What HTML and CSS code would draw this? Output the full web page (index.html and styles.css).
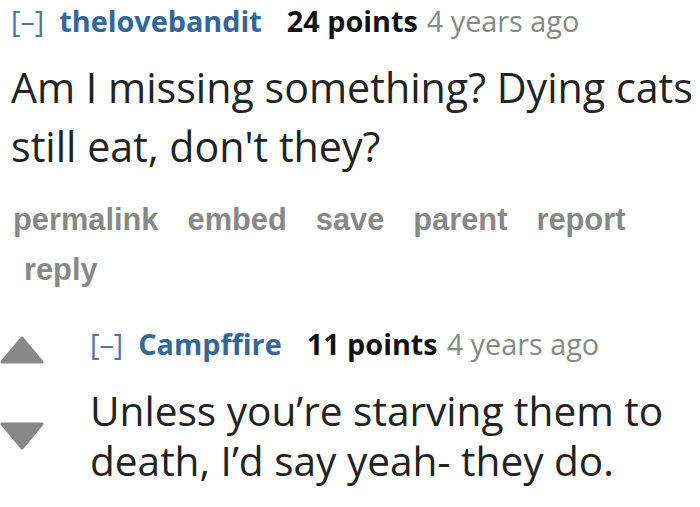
FILE: index.html
```html
<!DOCTYPE html>
<html lang="en">
<head>
<meta charset="utf-8">
<title>Comments</title>
<link rel="stylesheet" href="styles.css">
</head>
<body>
<div class="thread">
  <div class="comment top">
    <div class="tagline">
      <span class="expand">[–]</span>
      <a class="author">thelovebandit</a>
      <span class="score">24 points</span>
      <span class="time">4 years ago</span>
    </div>
    <div class="md">Am I missing something? Dying cats still eat, don't they?</div>
    <ul class="buttons">
      <li>permalink</li>
      <li>embed</li>
      <li>save</li>
      <li>parent</li>
      <li>report</li>
      <li class="reply">reply</li>
    </ul>
  </div>
  <div class="comment child">
    <div class="midcol">
      <svg class="arrow" width="44" height="28" viewBox="0 0 44 28"><polygon points="22,2 42,26 2,26" fill="#888" stroke="#888" stroke-width="3" stroke-linejoin="round"/></svg>
      <svg class="arrow down" width="44" height="28" viewBox="0 0 44 28"><polygon points="2,2 42,2 22,26" fill="#888" stroke="#888" stroke-width="3" stroke-linejoin="round"/></svg>
    </div>
    <div class="entry">
      <div class="tagline">
        <span class="expand">[–]</span>
        <a class="author">Campffire</a>
        <span class="score">11 points</span>
        <span class="time">4 years ago</span>
      </div>
      <div class="md md-tight">Unless you’re starving them to death, I’d say yeah- they do.</div>
    </div>
  </div>
</div>
</body>
</html>
```

FILE: styles.css
```css
html, body {
  margin: 0;
  padding: 0;
  background: #ffffff;
}

body {
  font-family: "Open Sans", "Noto Sans", sans-serif;
  color: #222222;
}

.thread {
  width: 700px;
}

.comment.top {
  padding-left: 11px;
}

.tagline {
  display: flex;
  align-items: baseline;
  font-size: 28.8px;
  line-height: 42px;
  white-space: nowrap;
}

.expand {
  color: #4f73a8;
  margin-right: 15px;
}

.author {
  color: #336699;
  font-weight: 700;
  margin-right: 25px;
}

.score {
  color: #111111;
  font-weight: 700;
  margin-right: 9px;
}

.time {
  color: #888888;
}

.md {
  margin-top: 16px;
  font-size: 41.2px;
  line-height: 59px;
  color: #222222;
}

.md-tight {
  margin-top: 21px;
  font-size: 40.6px;
  line-height: 50px;
}

.buttons {
  list-style: none;
  margin: 19px 0 0 0;
  padding: 0 0 0 2px;
  display: flex;
  flex-wrap: wrap;
  font-family: "Liberation Sans", Arial, sans-serif;
  font-weight: 700;
  font-size: 30.8px;
  line-height: 50px;
  color: #888888;
}

.buttons li {
  margin-right: 29px;
}

.buttons li.reply {
  margin-left: 11px;
}

.comment.child {
  display: flex;
  align-items: flex-start;
  margin-top: 28px;
}

.midcol {
  width: 44px;
  padding-top: 13px;
  display: flex;
  flex-direction: column;
  gap: 58px;
}

.arrow {
  display: block;
}

.entry {
  padding-left: 46px;
}
```
